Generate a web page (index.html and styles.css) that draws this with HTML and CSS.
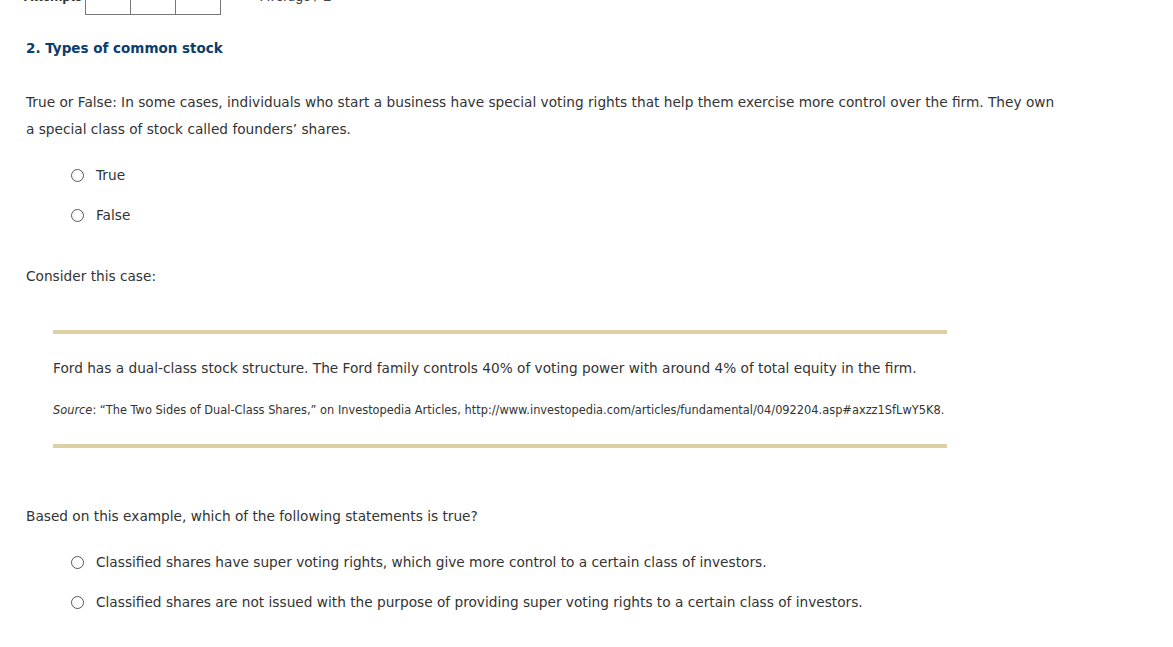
FILE: index.html
```html
<!DOCTYPE html>
<html lang="en">
<head>
<meta charset="UTF-8">
<meta name="viewport" content="width=device-width, initial-scale=1.0">
<title>Types of common stock</title>
<link rel="stylesheet" href="styles.css">
</head>
<body>
<div class="attempts-row">
  <div class="attempts">
    <span class="attempts-label">Attempts</span>
    <div class="attempt-boxes">
      <div class="attempt-box"></div>
      <div class="attempt-box"></div>
      <div class="attempt-box"></div>
    </div>
  </div>
  <div class="average">Average / 2</div>
</div>

<h2 class="question-title">2. Types of common stock</h2>

<p class="prompt intro">True or False: In some cases, individuals who start a business have special voting rights that help them exercise more control over the firm. They own a special class of stock called founders’ shares.</p>

<div class="choices">
  <label class="choice"><span class="radio"></span>True</label>
  <label class="choice"><span class="radio"></span>False</label>
</div>

<p class="prompt case-intro">Consider this case:</p>

<div class="case-box">
  <p class="case-text">Ford has a dual-class stock structure. The Ford family controls 40% of voting power with around 4% of total equity in the firm.</p>
  <p class="source"><em>Source</em>: “The Two Sides of Dual-Class Shares,” on Investopedia Articles, http://www.investopedia.com/articles/fundamental/04/092204.asp#axzz1SfLwY5K8.</p>
</div>

<p class="prompt based-on">Based on this example, which of the following statements is true?</p>

<div class="choices">
  <label class="choice"><span class="radio"></span>Classified shares have super voting rights, which give more control to a certain class of investors.</label>
  <label class="choice"><span class="radio"></span>Classified shares are not issued with the purpose of providing super voting rights to a certain class of investors.</label>
</div>
</body>
</html>
```

FILE: styles.css
```css
body {
  margin: 0;
  padding: 0 26px;
  font-family: "DejaVu Sans", Verdana, sans-serif;
  font-size: 13.7px;
  color: #333;
  background-color: #fff;
}
.attempts-row {
  display: flex;
  align-items: flex-end;
  height: 15px;
  font-family: Roboto, "Liberation Sans", sans-serif;
  font-size: 14px;
  line-height: 16px;
}
.attempts {
  display: flex;
  align-items: flex-end;
}
.attempts-label {
  font-weight: bold;
  margin-left: -2px;
  margin-right: 4px;
  padding-bottom: 11px;
}
.attempt-boxes {
  display: flex;
}
.attempt-box {
  width: 44px;
  height: 28px;
  border: 1px solid #777;
  margin-left: -1px;
}
.average {
  margin-left: 39px;
  padding-bottom: 11px;
  color: #444;
}
.question-title {
  margin: 24px 0 0;
  font-size: 13.5px;
  font-weight: bold;
  color: #0b3c6b;
  line-height: 18px;
}
.prompt {
  margin: 0;
  line-height: 27px;
}
.intro {
  margin-top: 32px;
  max-width: 1040px;
}
.choices {
  display: flex;
  flex-direction: column;
  gap: 21px;
  margin: 23px 0 0 44px;
}
.choice {
  display: flex;
  align-items: center;
  line-height: 19px;
}
.radio {
  width: 11px;
  height: 11px;
  border: 1px solid #555;
  border-radius: 50%;
  margin-right: 12px;
  margin-left: 1px;
}
.case-intro {
  margin-top: 38px;
}
.case-box {
  margin: 40px 0 0 27px;
  width: 894px;
  border-top: 4px solid #dcd1a5;
  border-bottom: 4px solid #dcd1a5;
  padding: 25px 0 27px;
}
.case-text {
  margin: 0;
  line-height: 19px;
}
.source {
  margin: 25px 0 0;
  font-size: 11.4px;
  line-height: 14px;
}
.based-on {
  margin-top: 55px;
}
.based-on + .choices {
  margin-top: 23px;
}
```
